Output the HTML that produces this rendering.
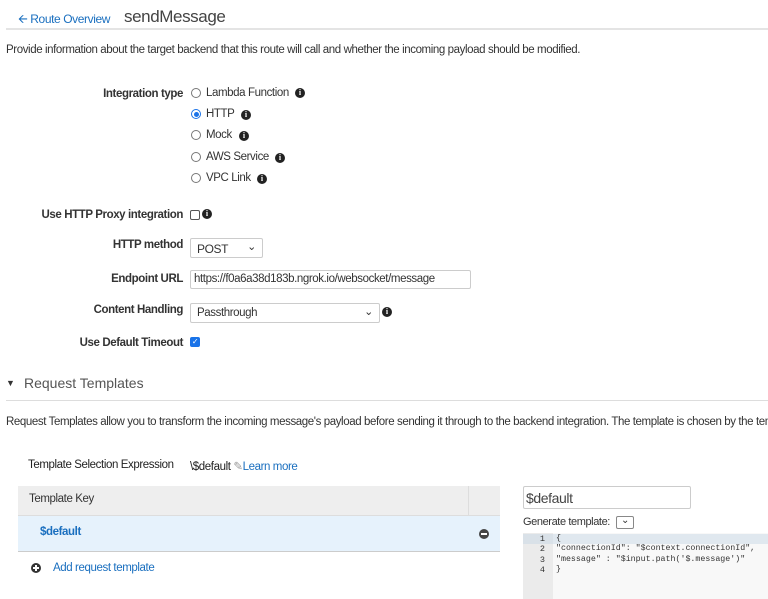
<!DOCTYPE html><html><head><style>
body{margin:0;width:768px;height:599px;overflow:hidden;background:#fff;font-family:"Liberation Sans",sans-serif;font-size:11.5px;letter-spacing:-0.4px;color:#333;position:relative}
.a{position:absolute;white-space:nowrap}
.lbl{position:absolute;right:585px;font-weight:bold;color:#333;white-space:nowrap}
.rad{position:absolute;left:191px;width:8px;height:8px;border:1px solid #777;border-radius:50%;background:#fff}
.i{position:absolute;width:10px;height:10px;border-radius:50%;background:#222;color:#fff;font-size:8px;line-height:10px;text-align:center;font-weight:bold;font-family:"Liberation Serif",serif;letter-spacing:0}
.box{position:absolute;border:1px solid #ccc;border-radius:2px;background:#fff;box-sizing:border-box}
.blue{color:#1a6fbf}
</style></head><body>
<div class="a blue" style="left:18px;top:10px;font-size:12px">&#129128; Route Overview</div>
<div class="a" style="left:124px;top:7px;font-size:17px;color:#444">sendMessage</div>
<div class="a" style="left:6px;top:28px;width:762px;height:2px;background:#e4e4e4"></div>
<div class="a" style="left:6px;top:44px">Provide information about the target backend that this route will call and whether the incoming payload should be modified.</div>

<div class="lbl" style="top:88px">Integration type</div>
<div class="rad" style="top:88px"></div><div class="a" style="left:206px;top:87px">Lambda Function</div><div class="i" style="left:295px;top:88px">i</div>
<div class="rad" style="top:109px;border-color:#1a73e8"><div style="position:absolute;left:1.5px;top:1.5px;width:5px;height:5px;border-radius:50%;background:#1a73e8"></div></div><div class="a" style="left:206px;top:108px">HTTP</div><div class="i" style="left:241px;top:110px">i</div>
<div class="rad" style="top:130px"></div><div class="a" style="left:206px;top:129px">Mock</div><div class="i" style="left:239px;top:131px">i</div>
<div class="rad" style="top:152px"></div><div class="a" style="left:206px;top:151px">AWS Service</div><div class="i" style="left:275px;top:153px">i</div>
<div class="rad" style="top:173px"></div><div class="a" style="left:206px;top:172px">VPC Link</div><div class="i" style="left:257px;top:174px">i</div>

<div class="lbl" style="top:209px">Use HTTP Proxy integration</div>
<div class="a" style="left:190px;top:210px;width:8px;height:8px;border:1px solid #555;border-radius:2px"></div>
<div class="i" style="left:202px;top:209px">i</div>

<div class="lbl" style="top:239px">HTTP method</div>
<div class="box" style="left:190px;top:238px;width:73px;height:20px;padding:3px 6px;font-size:12px">POST<span style="position:absolute;right:6px;top:1px;font-size:11px">&#8964;</span></div>

<div class="lbl" style="top:273px">Endpoint URL</div>
<div class="box" style="left:190px;top:270px;width:281px;height:19px;padding:2px 3px">https://f0a6a38d183b.ngrok.io/websocket/message</div>

<div class="lbl" style="top:304px">Content Handling</div>
<div class="box" style="left:190px;top:303px;width:190px;height:20px;padding:3px 6px">Passthrough<span style="position:absolute;right:6px;top:1px;font-size:11px">&#8964;</span></div>
<div class="i" style="left:382px;top:307px">i</div>

<div class="lbl" style="top:337px">Use Default Timeout</div>
<div class="a" style="left:190px;top:337px;width:10px;height:10px;background:#1a73e8;border-radius:2px;color:#fff;font-size:8px;line-height:10px;text-align:center">&#10003;</div>

<div class="a" style="left:6px;top:378px;font-size:9px;color:#333">&#9660;</div>
<div class="a" style="left:24px;top:375px;font-size:14px;color:#555;letter-spacing:0">Request Templates</div>
<div class="a" style="left:6px;top:400px;width:762px;height:1px;background:#ddd"></div>
<div class="a" style="left:6px;top:416px;width:762px;overflow:hidden">Request Templates allow you to transform the incoming message's payload before sending it through to the backend integration. The template is chosen by the template selection expression.</div>

<div class="a" style="left:28px;top:459px;color:#222">Template Selection Expression</div>
<div class="a" style="left:190px;top:459px;color:#222">\$default <span style="color:#999">&#9998;</span><span class="blue">Learn more</span></div>

<div class="a" style="left:18px;top:486px;width:482px;height:29px;background:#eee;border-bottom:1px solid #ddd"></div>
<div class="a" style="left:468px;top:486px;width:1px;height:29px;background:#ddd"></div>
<div class="a" style="left:29px;top:493px;color:#333">Template Key</div>
<div class="a" style="left:18px;top:516px;width:482px;height:35px;background:#e6f2fc;border-bottom:1px solid #ccc"></div>
<div class="a blue" style="left:40px;top:526px;font-weight:bold">$default</div>
<div class="a" style="left:479px;top:529px;width:10px;height:10px;border-radius:50%;background:#444"><div style="position:absolute;left:2px;top:4px;width:6px;height:2px;background:#fff"></div></div>
<div class="a" style="left:31px;top:563px;width:10px;height:10px;border-radius:50%;background:#333"><div style="position:absolute;left:2px;top:4px;width:6px;height:2px;background:#fff"></div><div style="position:absolute;left:4px;top:2px;width:2px;height:6px;background:#fff"></div></div>
<div class="a blue" style="left:53px;top:562px">Add request template</div>

<div class="box" style="left:523px;top:486px;width:168px;height:23px;padding:3px 2px;font-size:14px;color:#444">$default</div>
<div class="a" style="left:523px;top:516px;font-size:11px">Generate template:</div>
<div class="box" style="left:616px;top:516px;width:18px;height:13px;border-color:#888;font-size:10px;text-align:center;line-height:8px">&#8964;</div>
<div class="a" style="left:523px;top:533px;width:245px;height:66px;background:#f8f8f8"></div>
<div class="a" style="left:523px;top:533px;width:30px;height:66px;background:#ebebeb"></div>
<div class="a" style="left:523px;top:534px;width:245px;height:10px;background:rgba(200,215,230,.5)"></div>
<div class="a" style="left:523px;top:534px;width:22px;font-family:'Liberation Mono',monospace;letter-spacing:0;font-size:8.5px;line-height:10.3px;text-align:right;color:#333">1<br>2<br>3<br>4</div>
<div class="a" style="left:556px;top:534px;font-family:'Liberation Mono',monospace;letter-spacing:0;font-size:8.3px;line-height:10.3px;color:#333">{<br>"connectionId": "$context.connectionId",<br>"message" : "$input.path('$.message')"<br>}</div>
</body></html>
